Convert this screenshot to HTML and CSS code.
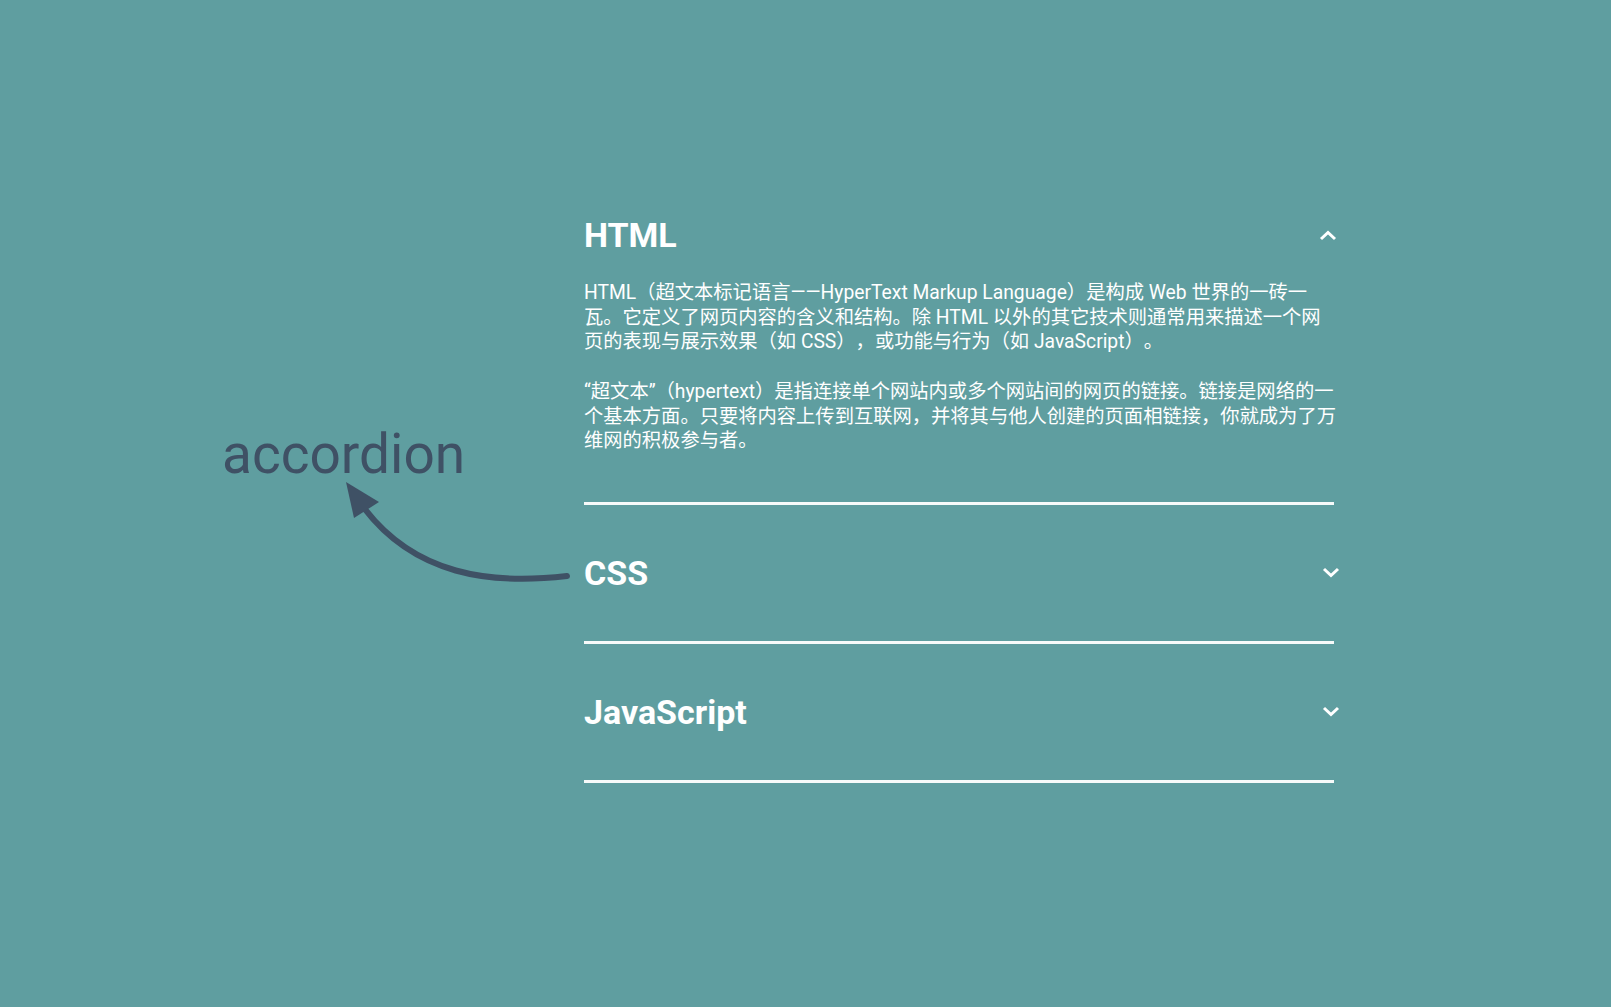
FILE: index.html
```html
<!DOCTYPE html>
<html lang="zh">
<head>
    <meta charset="UTF-8" />
    <meta name="viewport" content="width=device-width, initial-scale=1.0" />
    <title>accordion</title>
    <link rel="stylesheet" href="styles.css">
</head>

<body>
    <main class="stage">
        <!-- 左边的标注 -->
        <div class="note">
            <div class="note-label">accordion</div>
            <svg class="note-arrow" width="240" height="115" viewBox="0 0 240 115">
                <path d="M227 101 C150 110, 75 100, 24 33" fill="none" stroke="#3f5165" stroke-width="6" stroke-linecap="round" />
                <polygon points="6,7 39,27 14,43" fill="#3f5165" />
            </svg>
        </div>

        <div class="accordion">
            <div class="item open">
                <div class="item-head">
                    <h2>HTML</h2>
                    <svg class="chevron" width="18" height="11" viewBox="0 0 18 11">
                        <polyline points="2,9 9,2.5 16,9" fill="none" stroke="#fff" stroke-width="3" />
                    </svg>
                </div>
                <div class="item-body">
                    <p>HTML（超文本标记语言——HyperText Markup Language）是构成 Web 世界的一砖一瓦。它定义了网页内容的含义和结构。除 HTML 以外的其它技术则通常用来描述一个网页的表现与展示效果（如 CSS），或功能与行为（如 JavaScript）。</p>
                    <p>“超文本”（hypertext）是指连接单个网站内或多个网站间的网页的链接。链接是网络的一个基本方面。只要将内容上传到互联网，并将其与他人创建的页面相链接，你就成为了万维网的积极参与者。</p>
                </div>
            </div>

            <div class="item">
                <div class="item-head">
                    <h2>CSS</h2>
                    <svg class="chevron down" width="18" height="11" viewBox="0 0 18 11">
                        <polyline points="2,2 9,8.5 16,2" fill="none" stroke="#fff" stroke-width="3" />
                    </svg>
                </div>
            </div>

            <div class="item">
                <div class="item-head">
                    <h2>JavaScript</h2>
                    <svg class="chevron down" width="18" height="11" viewBox="0 0 18 11">
                        <polyline points="2,2 9,8.5 16,2" fill="none" stroke="#fff" stroke-width="3" />
                    </svg>
                </div>
            </div>
        </div>
    </main>

    <script>
        // 点击标题展开/收起
        document.querySelectorAll('.item-head').forEach((head) => {
            head.addEventListener('click', () => {
                head.parentElement.classList.toggle('open');
            });
        });
    </script>
</body>
</html>
```

FILE: styles.css
```css
body {
    margin: 0;
    min-height: 100vh;
    background: #5f9ea0;
    font-family: Roboto, "Noto Sans CJK SC", sans-serif;
    color: #fff;
}

.stage {
    display: flex;
    padding: 167px 0 0 222px;
}

/* 标注 */
.note {
    position: relative;
    width: 362px;
    flex-shrink: 0;
}

.note-label {
    margin-top: 259px;
    font-size: 55px;
    line-height: 56px;
    color: #3f5165;
}

.note-arrow {
    position: absolute;
    left: 118px;
    top: 308px;
}

/* 手风琴 */
.accordion {
    width: 750px;
}

.item {
    padding: 48px 0;
    border-bottom: 3px solid #f7fafa;
}

.item-head {
    display: flex;
    align-items: center;
    justify-content: space-between;
    height: 40px;
    cursor: pointer;
}

.item-head h2 {
    margin: 0;
    font-size: 34px;
    line-height: 40px;
    font-weight: 700;
}

.chevron {
    margin-right: -3px;
}

.chevron.down {
    margin-right: -6px;
}

.item-body {
    display: none;
    margin: 26px -4px 0 0;
}

.item.open .item-body {
    display: block;
}

.item-body p {
    margin: 0 0 24.7px;
    font-size: 19.3px;
    line-height: 24.7px;
    text-spacing-trim: space-all;
}

.item-body p:last-child {
    margin-bottom: 0;
}
```
